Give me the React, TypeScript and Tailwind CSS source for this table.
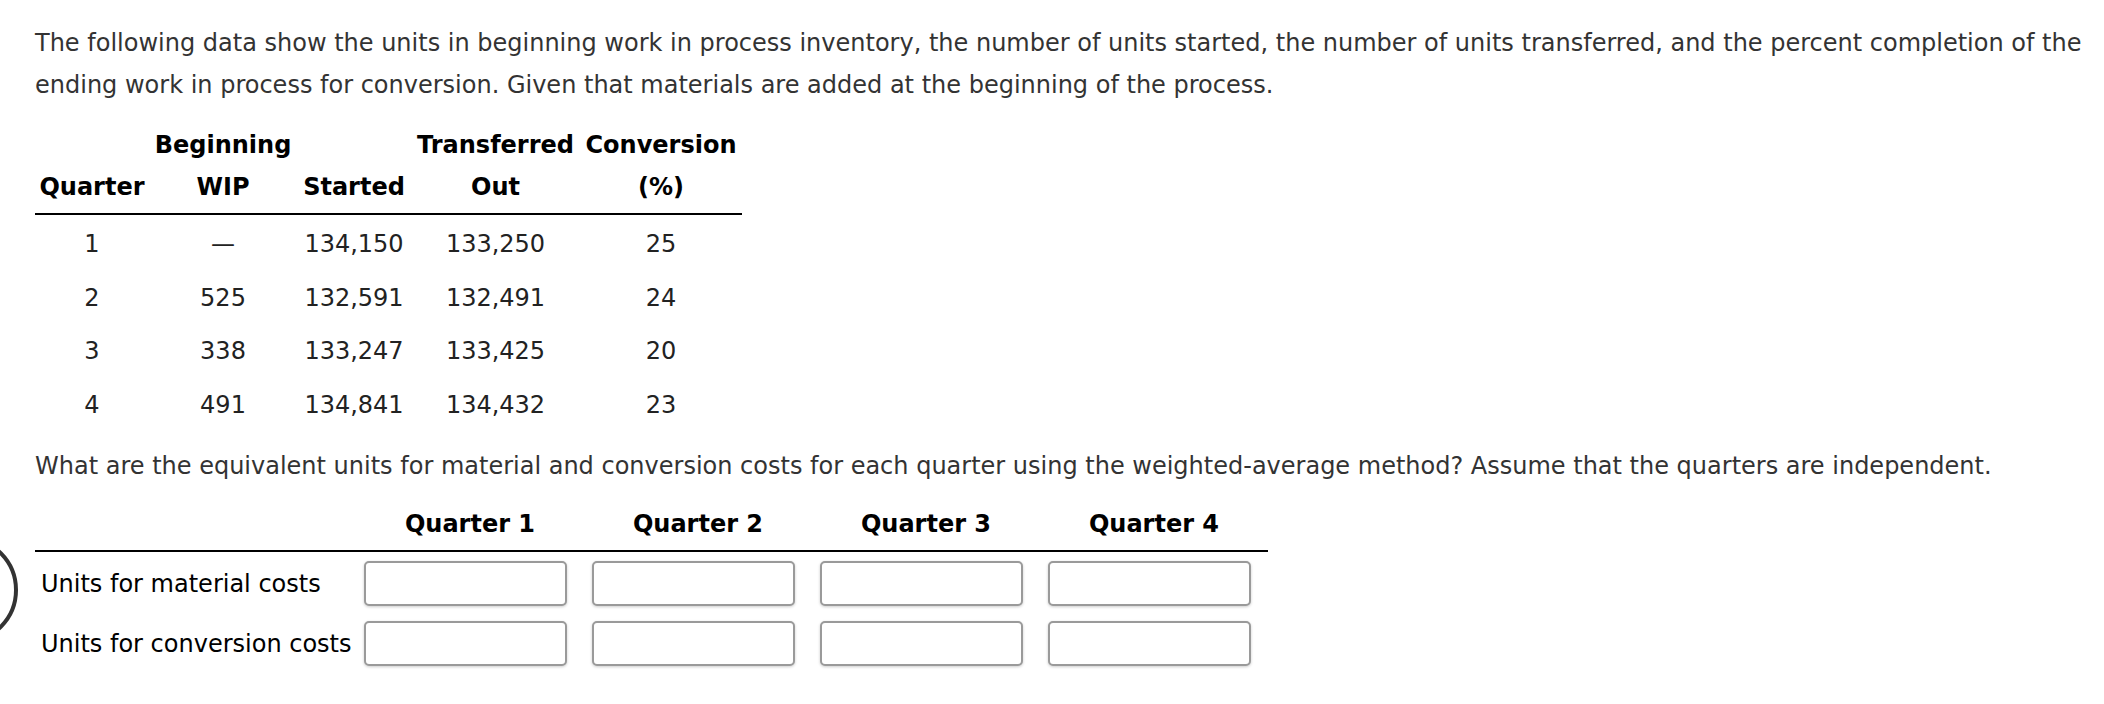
export default function App() {
  const rows = [
    ["1", "—", "134,150", "133,250", "25"],
    ["2", "525", "132,591", "132,491", "24"],
    ["3", "338", "133,247", "133,425", "20"],
    ["4", "491", "134,841", "134,432", "23"],
  ];

  const labels = ["Units for material costs", "Units for conversion costs"];

  return (
    <div
      className="relative min-h-[704px] w-[2104px] bg-white pl-[35px] pt-[23px] text-[24px] text-[#333]"
      style={{ fontFamily: '"DejaVu Sans", Verdana, sans-serif' }}
    >
      <p className="whitespace-nowrap leading-[41.5px]">
        The following data show the units in beginning work in process inventory, the number of units started, the
        number of units transferred, and the percent completion of the
        <br />
        ending work in process for conversion. Given that materials are added at the beginning of the process.
      </p>

      <div className="mt-[19px] w-[707px]">
        <div className="grid grid-cols-[114px_148px_114px_169px_162px] font-bold text-black leading-[41.5px]">
          <div />
          <div className="text-center">Beginning</div>
          <div />
          <div className="text-center">Transferred</div>
          <div className="text-center">Conversion</div>
          <div className="text-center">Quarter</div>
          <div className="text-center">WIP</div>
          <div className="text-center">Started</div>
          <div className="text-center">Out</div>
          <div className="text-center">(%)</div>
        </div>
        <div className="mt-[5px] border-t-2 border-black" />
        <div className="pt-[2px] text-[#222]">
          {rows.map((r, i) => (
            <div key={i} className="grid h-[53.7px] grid-cols-[114px_148px_114px_169px_162px] items-center">
              {r.map((c, j) => (
                <div key={j} className="text-center">
                  {c}
                </div>
              ))}
            </div>
          ))}
        </div>
      </div>

      <p className="mt-[14px] whitespace-nowrap leading-[41.5px]">
        What are the equivalent units for material and conversion costs for each quarter using the weighted-average
        method? Assume that the quarters are independent.
      </p>

      <div className="mt-[18px] w-[1233px]">
        <div className="grid grid-cols-[321px_228px_228px_228px_228px] font-bold text-black leading-[38px]">
          <div />
          <div className="text-center">Quarter 1</div>
          <div className="text-center">Quarter 2</div>
          <div className="text-center">Quarter 3</div>
          <div className="text-center">Quarter 4</div>
        </div>
        <div className="mt-[7px] border-t-2 border-black" />
        <div className="pt-[9px]">
          {labels.map((l) => (
            <div key={l} className="mb-[15px] grid grid-cols-[321px_228px_228px_228px_228px] items-center text-black">
              <div className="whitespace-nowrap pl-[6px]">{l}</div>
              {[1, 2, 3, 4].map((n) => (
                <div key={n} className="pl-[8px]">
                  <input
                    type="text"
                    className="h-[45px] w-[203px] rounded-[5px] border-2 border-[#9a9a9a] bg-white shadow-[0_1px_3px_rgba(0,0,0,0.2)] outline-none"
                  />
                </div>
              ))}
            </div>
          ))}
        </div>
      </div>

      <svg className="absolute left-0 top-[540px]" width="24" height="100" viewBox="0 0 24 100">
        <circle cx="-36" cy="50" r="52" fill="none" stroke="#333" strokeWidth="4" />
      </svg>
    </div>
  );
}
